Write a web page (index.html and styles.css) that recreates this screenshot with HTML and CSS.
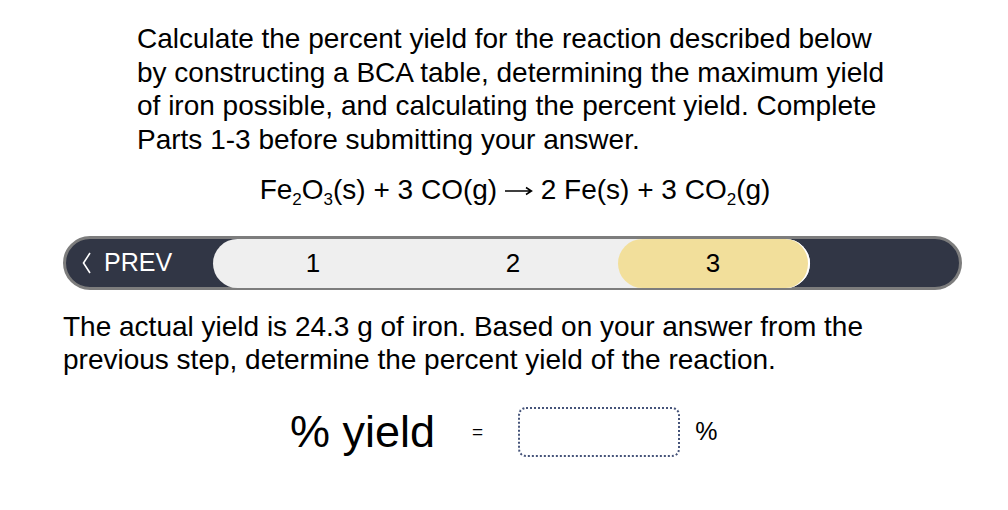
FILE: index.html
```html
<!DOCTYPE html>
<html lang="en">
<head>
<meta charset="UTF-8">
<title>Percent yield</title>
<link rel="stylesheet" href="styles.css">
</head>
<body>

<div class="intro">
    <p>Calculate the percent yield for the reaction described below by constructing a BCA table, determining the maximum yield of iron possible, and calculating the percent yield. Complete Parts 1-3 before submitting your answer.</p>
    <div class="equation">Fe<sub>2</sub>O<sub>3</sub>(s) + 3 CO(g) <svg class="arrow" width="28" height="10" viewBox="0 0 28 10"><path d="M0 5H26M21 1.5L26.5 5L21 8.5" fill="none" stroke="#000" stroke-width="1.5"/></svg> 2 Fe(s) + 3 CO<sub>2</sub>(g)</div>
</div>

<div class="steps">
    <button class="prev">
        <svg class="chev" width="9" height="22" viewBox="0 0 9 22"><polyline points="8,1 1.5,11 8,21" fill="none" stroke="#fff" stroke-width="1.6"/></svg>
        PREV
    </button>
    <div class="track">
        <div class="step">1</div>
        <div class="step">2</div>
        <div class="step active">3</div>
    </div>
</div>

<p class="question">The actual yield is 24.3 g of iron. Based on your answer from the previous step, determine the percent yield of the reaction.</p>

<div class="answer">
    <span class="label">% yield</span>
    <span class="eq">=</span>
    <input class="box" type="text">
    <span class="unit">%</span>
</div>

</body>
</html>
```

FILE: styles.css
```css
body {
    margin: 0;
    font-family: "Liberation Sans", Arial, sans-serif;
    color: #000;
    background: #fff;
}
p { margin: 0; }

.intro {
    width: 760px;
    margin-left: 137px;
    padding-top: 22px;
    font-size: 28px;
    line-height: 33.5px;
}
.equation {
    text-align: center;
    margin-top: 17px;
    padding-right: 4px;
}
.equation sub {
    font-size: 17px;
    vertical-align: -6px;
    line-height: 0;
}
.arrow { vertical-align: 3px; }

.steps {
    display: flex;
    align-items: stretch;
    width: 893px;
    height: 48px;
    margin: 29px 0 0 63px;
    border: 3px solid #7d7d7d;
    border-radius: 30px;
    background: #313645;
}
.prev {
    width: 147px;
    display: flex;
    align-items: center;
    border: none;
    background: none;
    color: #fff;
    font: 25px "Liberation Sans", Arial, sans-serif;
    padding: 0 0 0 16px;
}
.chev { margin-right: 13px; }
.track {
    display: flex;
    background: #efefef;
    border-radius: 26px;
    margin-bottom: -1px;
}
.step {
    width: 200px;
    display: flex;
    align-items: center;
    justify-content: center;
    font-size: 26px;
}
.step.active {
    width: 190px;
    margin-left: 5px;
    background: #f2df9b;
    border-radius: 26px;
    border-right: 2px solid #fff;
}

.question {
    margin: 20px 0 0 63px;
    width: 840px;
    font-size: 28px;
    line-height: 33.5px;
}

.answer {
    display: flex;
    align-items: center;
    margin: 29px 0 0 290px;
}
.label { font-size: 45px; }
.eq { font-size: 19px; margin-left: 37px; }
.box {
    width: 162px;
    height: 50px;
    margin-left: 35px;
    padding: 0;
    border: 2px dotted #46547a;
    border-radius: 8px;
    box-sizing: border-box;
}
.unit { font-size: 25px; margin-left: 15px; }
```
